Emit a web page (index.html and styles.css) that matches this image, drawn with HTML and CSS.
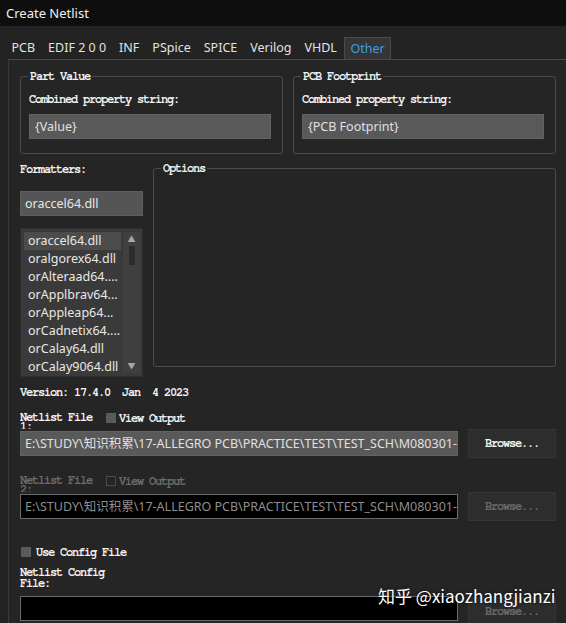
FILE: index.html
```html
<!DOCTYPE html>
<html lang="zh-CN">
<head>
  <meta charset="UTF-8" />
  <title>Create Netlist</title>
  <link rel="stylesheet" href="styles.css">
</head>
<body>
  <div class="titlebar">Create Netlist</div>
  <div class="tabs">
    <span class="tab">PCB</span>
    <span class="tab">EDIF 2 0 0</span>
    <span class="tab">INF</span>
    <span class="tab">PSpice</span>
    <span class="tab">SPICE</span>
    <span class="tab">Verilog</span>
    <span class="tab">VHDL</span>
    <span class="tab active">Other</span>
  </div>

  <div class="panel">
    <div class="groups">
      <fieldset class="group">
        <legend>Part Value</legend>
        <div class="label">Combined property string:</div>
        <div class="field">{Value}</div>
      </fieldset>
      <fieldset class="group">
        <legend>PCB Footprint</legend>
        <div class="label">Combined property string:</div>
        <div class="field">{PCB Footprint}</div>
      </fieldset>
    </div>

    <div class="middle">
      <div class="formatters">
        <div class="label">Formatters:</div>
        <div class="combo">oraccel64.dll</div>
        <div class="listbox">
          <ul class="items">
            <li class="selected">oraccel64.dll</li>
            <li>oralgorex64.dll</li>
            <li>orAlteraad64....</li>
            <li>orApplbrav64...</li>
            <li>orAppleap64...</li>
            <li>orCadnetix64....</li>
            <li>orCalay64.dll</li>
            <li>orCalay9064.dll</li>
          </ul>
          <div class="scrollbar">
            <span class="arrow">&#9650;</span>
            <span class="thumb"></span>
            <span class="arrow down">&#9660;</span>
          </div>
        </div>
      </div>
      <fieldset class="options">
        <legend>Options</legend>
      </fieldset>
    </div>

    <div class="version">Version: 17.4.0  Jan  4 2023</div>

    <div class="file-head">
      <div class="file-label">Netlist File 1:</div>
      <label class="check"><span class="box filled"></span>View Output</label>
    </div>
    <div class="file-row">
      <div class="field path">E:\STUDY\知识积累\17-ALLEGRO PCB\PRACTICE\TEST\TEST_SCH\M080301-</div>
      <div class="button">Browse...</div>
    </div>

    <div class="file-head disabled second">
      <div class="file-label">Netlist File 2:</div>
      <label class="check"><span class="box"></span>View Output</label>
    </div>
    <div class="file-row">
      <div class="field path dark">E:\STUDY\知识积累\17-ALLEGRO PCB\PRACTICE\TEST\TEST_SCH\M080301-</div>
      <div class="button disabled">Browse...</div>
    </div>

    <label class="check config"><span class="box filled"></span>Use Config File</label>
    <div class="config-label">Netlist Config File:</div>
    <div class="file-row last">
      <div class="field path dark empty"></div>
      <div class="button disabled">Browse...</div>
    </div>
  </div>

  <div class="watermark">知乎 @xiaozhangjianzi</div>
</body>
</html>
```

FILE: styles.css
```css
html, body { margin: 0; height: 100%; }
body {
  background: #232323;
  color: #e6e6e6;
  font-family: "Noto Sans", "Noto Sans CJK SC", sans-serif;
  overflow: hidden;
  position: relative;
}

.titlebar {
  height: 26px;
  line-height: 26px;
  background: #0e0e0e;
  color: #f0f0f0;
  font-size: 13px;
  padding-left: 6px;
}

.tabs {
  display: flex;
  padding: 11px 0 0 5px;
  height: 22px;
}
.tab {
  font-size: 12.5px;
  line-height: 22px;
  padding: 0 6.5px;
  color: #e2e2e2;
}
.tab.active {
  color: #3d9ee0;
  background: #353535;
  border: 1px solid #4a4a4a;
  border-bottom: none;
  padding: 0 5px;
  margin-left: 1px;
}

.panel {
  margin-left: 8px;
  border-left: 1px solid #3a3a3a;
  border-top: 1px solid #4a4a4a;
  background: #252525;
  padding: 10px 10px 0 11px;
}

/* mono labels */
.label, legend, .version, .file-label, .check, .config-label, .button {
  font-family: "Nimbus Mono PS", "FreeMono", "Courier New", "Liberation Mono", monospace;
  font-size: 12px;
  font-weight: bold;
  letter-spacing: -1.2px;
  color: #f2f2f2;
  white-space: pre;
}

fieldset {
  margin: 0;
  border: 1px solid #4b4b4b;
  border-radius: 3px;
  min-width: 0;
}
legend {
  padding: 0 2px;
  margin-left: -1px;
  line-height: 12px;
}

.groups {
  display: grid;
  grid-template-columns: 1fr 1fr;
  gap: 10px;
}
.group {
  padding: 0 11px 14px 8px;
}
.group .label {
  line-height: 12px;
  margin-top: 11px;
}
.field {
  background: #595959;
  border: 1px solid #636363;
  color: #e0e0e0;
  font-size: 12.5px;
  height: 23px;
  line-height: 23px;
  padding: 0 5px;
  white-space: nowrap;
  overflow: hidden;
}
.group .field { margin-top: 9px; }

.middle {
  display: flex;
  gap: 10px;
  margin-top: 8px;
}
.formatters { width: 123px; }
.formatters .label { line-height: 12px; margin-top: 1px; }
.combo {
  margin-top: 16px;
  height: 23px;
  line-height: 23px;
  background: #555;
  border: 1px solid #5e5e5e;
  font-size: 12.5px;
  color: #e6e6e6;
  padding: 0 4px;
}
.listbox {
  margin-top: 12px;
  height: 141px;
  background: #3a3a3a;
  border: 1px solid #2f2f2f;
  padding: 3px 2px 3px 3px;
  display: flex;
}
.items {
  list-style: none;
  margin: 0;
  padding: 0;
  flex: 1;
  font-size: 12.5px;
  color: #e8e8e8;
}
.items li {
  height: 18px;
  line-height: 18px;
  padding-left: 4px;
  white-space: nowrap;
  overflow: hidden;
}
.items li.selected { background: #4c4c4c; margin-right: 2px; }
.scrollbar {
  width: 17px;
  background: #404040;
  display: flex;
  flex-direction: column;
  align-items: center;
}
.arrow {
  font-size: 8px;
  color: #a8a8a8;
  line-height: 14px;
  height: 14px;
}
.arrow.down { margin-top: auto; }
.thumb {
  width: 6px;
  height: 19px;
  background: #2c2c2c;
}

.options {
  flex: 1;
  height: 203px;
  padding: 0 8px;
}

.version {
  line-height: 12px;
  margin-top: 9px;
}

.file-head {
  display: flex;
  align-items: flex-start;
  margin-top: 13px;
  height: 18px;
}
.file-head.second { margin-top: 16px; }
.file-label {
  width: 86px;
  white-space: normal;
  line-height: 9px;
  height: 16px;
  padding-top: 2px;
  overflow: hidden;
}
.check {
  display: flex;
  align-items: center;
  gap: 3px;
  line-height: 12px;
}
.file-head .check { margin-top: 1px; }
.box {
  width: 10px;
  height: 10px;
  box-sizing: border-box;
  border: 1px solid #4e4e4e;
}
.box.filled { background: #5a5a5a; border-color: #5a5a5a; }
.disabled .file-label, .disabled .check { color: #6c6c6c; }
.disabled .box { border-color: #4a4a4a; }

.file-row {
  display: grid;
  grid-template-columns: 438px 88px;
  gap: 10px;
  align-items: center;
  height: 29px;
}
.path { padding: 0 4px; }
.path.dark {
  background: #000;
  border: 1px solid #6a6a6a;
  color: #8e8e8e;
}
.button {
  height: 27px;
  line-height: 27px;
  background: #2d2d2d;
  border: 1px solid #353535;
  text-align: center;
}
.button.disabled { color: #6a6a6a; }
.file-row.last { align-items: start; }
.file-row.last .button { margin-top: 1px; }

.check.config {
  margin: 25px 0 0 1px;
  gap: 5px;
}
.config-label {
  white-space: normal;
  width: 90px;
  line-height: 11px;
  margin: 9px 0 7px;
  height: 22px;
}

.watermark {
  position: absolute;
  left: 378px;
  top: 583px;
  font-size: 17px;
  color: #fff;
  text-shadow: 0 0 3px rgba(0, 0, 0, 0.8);
  font-family: "Noto Sans CJK SC", "Noto Sans", sans-serif;
}
```
